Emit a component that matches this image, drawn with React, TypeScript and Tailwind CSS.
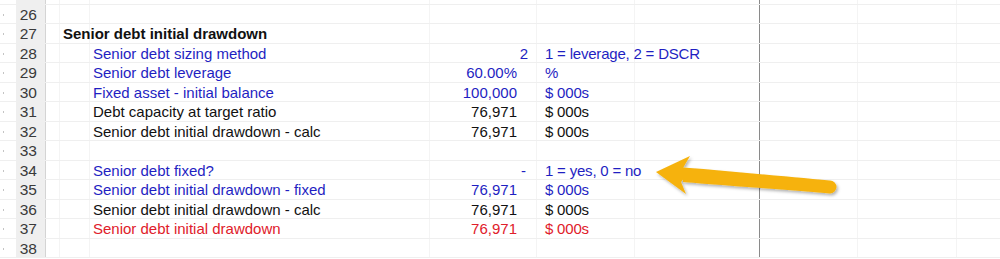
const BLUE = 'text-[#1f1fc2]';
const RED = 'text-[#e0202a]';
const BLACK = 'text-[#111111]';

type Row = {
  n: number;
  title?: string;
  label?: string;
  value?: string;
  valuePad?: string;
  unit?: string;
  color?: string;
};

const rows: Row[] = [
  { n: 26 },
  { n: 27, title: 'Senior debt initial drawdown' },
  { n: 28, label: 'Senior debt sizing method', value: '2', valuePad: 'pr-[8px]', unit: '1 = leverage, 2 = DSCR', color: BLUE },
  { n: 29, label: 'Senior debt leverage', value: '60.00%', unit: '%', color: BLUE },
  { n: 30, label: 'Fixed asset - initial balance', value: '100,000', unit: '$ 000s', color: BLUE },
  { n: 31, label: 'Debt capacity at target ratio', value: '76,971', unit: '$ 000s', color: BLACK },
  { n: 32, label: 'Senior debt initial drawdown - calc', value: '76,971', unit: '$ 000s', color: BLACK },
  { n: 33 },
  { n: 34, label: 'Senior debt fixed?', value: '-', valuePad: 'pr-[10px]', unit: '1 = yes, 0 = no', color: BLUE },
  { n: 35, label: 'Senior debt initial drawdown - fixed', value: '76,971', unit: '$ 000s', color: BLUE },
  { n: 36, label: 'Senior debt initial drawdown - calc', value: '76,971', unit: '$ 000s', color: BLACK },
  { n: 37, label: 'Senior debt initial drawdown', value: '76,971', unit: '$ 000s', color: RED },
  { n: 38 },
];

function Cells({ row }: { row?: Row }) {
  const c = row?.color ?? BLACK;
  return (
    <>
      <div className="w-[14px] shrink-0 border-r border-[#f4f4f4]" />
      <div className="w-[30px] shrink-0 border-r border-[#f4f4f4] relative">
        {row?.title && (
          <span className="absolute left-[3px] top-0 leading-[19.5px] whitespace-nowrap font-bold text-[#111111]">
            {row.title}
          </span>
        )}
      </div>
      <div className={`w-[340px] shrink-0 border-r border-[#f4f4f4] pl-[3px] whitespace-nowrap ${c}`}>
        {row?.label}
      </div>
      <div className={`w-[107px] shrink-0 border-r border-[#f4f4f4] text-right whitespace-nowrap ${row?.valuePad ?? 'pr-[19px]'} ${c}`}>
        {row?.value}
      </div>
      <div className={`w-[98px] shrink-0 border-r border-[#f4f4f4] pl-[8px] whitespace-nowrap tracking-[-0.2px] ${c}`}>
        {row?.unit}
      </div>
      <div className="w-[125px] shrink-0 border-r border-[#8a8a8a]" />
      <div className="w-[98px] shrink-0 border-r border-[#f4f4f4]" />
      <div className="w-[99px] shrink-0 border-r border-[#f4f4f4]" />
      <div className="flex-1" />
    </>
  );
}

function Arrow() {
  return (
    <svg className="absolute left-0 top-0 pointer-events-none" width="1000" height="259" viewBox="0 0 1000 259">
      <defs>
        <filter id="sh" x="-10%" y="-30%" width="120%" height="160%">
          <feDropShadow dx="1.5" dy="2" stdDeviation="1.5" floodColor="#000" floodOpacity="0.3" />
        </filter>
      </defs>
      <g filter="url(#sh)" fill="#f6b20c">
        <path d="M683,167.5 C730,171 790,177 830,180.5 A6.5,6.5 0 0 1 830,193.5 C790,190 730,186 683,182 Z" />
        <path d="M656,172 L690,156 L683,168 L686,176 L681,182 L686,194 Z" />
      </g>
    </svg>
  );
}

export default function App() {
  return (
    <div className="relative w-[1000px] h-[259px] overflow-hidden bg-white text-[15px] font-['Liberation_Sans',Arial,sans-serif]">
      {/* partial row 25 */}
      <div className="flex h-[4.5px] border-b border-[#efefef]">
        <div className="w-[16px] shrink-0" />
        <div className="w-[30px] shrink-0 bg-[#efefef] border-r border-[#d4d4d4]" />
        <Cells />
      </div>
      {rows.map((row) => (
        <div key={row.n} className="flex h-[19.5px] leading-[19.5px] border-b border-[#efefef]">
          <div className="w-[16px] shrink-0 relative">
            <span className="absolute left-[3px] top-[9px] w-[1px] h-[2px] bg-[#c4c4c4]" />
          </div>
          <div className="w-[30px] shrink-0 bg-[#efefef] border-r border-[#d4d4d4] text-right pr-[8px] text-[15.5px] text-[#3a3a3a]">
            {row.n}
          </div>
          <Cells row={row} />
        </div>
      ))}
      <Arrow />
    </div>
  );
}
